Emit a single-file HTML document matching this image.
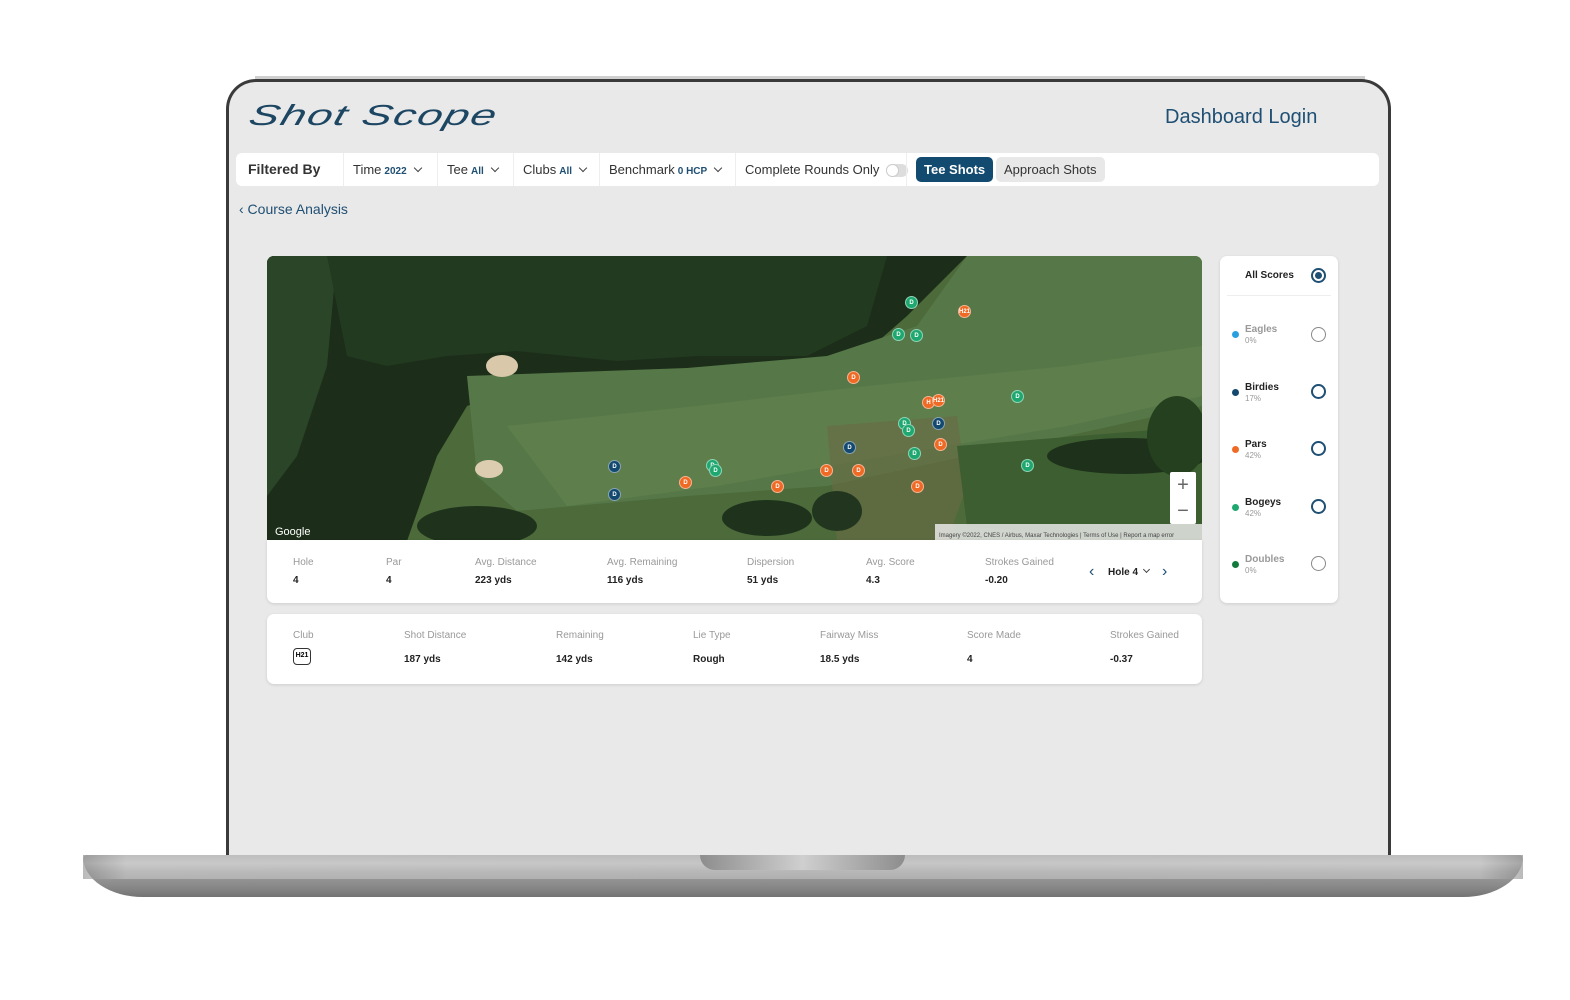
<!DOCTYPE html>
<html><head><meta charset="utf-8"><style>
*{margin:0;padding:0;box-sizing:border-box}
body{width:1570px;height:1000px;background:#fff;position:relative;overflow:hidden;font-family:"Liberation Sans",sans-serif}
.abs{position:absolute}
.screen{left:226px;top:79px;width:1165px;height:778px;border:3px solid #3a3a3a;border-bottom:none;border-radius:30px 30px 0 0;background:#e9e9e9;overflow:hidden}
.topline{left:255px;top:76px;width:1110px;height:4px;background:#cfcfcf}
.base{left:83px;top:855px;width:1440px;height:42px;border-radius:0 0 60px 60px/0 0 40px 40px;background:linear-gradient(180deg,#b0b0b0 0%,#cbcbcb 20%,#a5a5a5 40%,#959595 55%,#858585 80%,#737373 100%)}
.base:before{content:"";position:absolute;left:0;right:0;top:0;height:24px;background:linear-gradient(90deg,#8c8c8c 0%,#c8c8c8 3%,#c2c2c2 50%,#c8c8c8 97%,#8c8c8c 100%);opacity:.6;border-radius:4px 4px 0 0}
.notch{left:700px;top:855px;width:205px;height:15px;border-radius:0 0 22px 22px;background:linear-gradient(90deg,#8d8d8d,#cfcfcf 50%,#8d8d8d)}
.logo{left:254px;top:100px;font-style:italic;font-size:29px;color:#1d4663;transform-origin:0 0;transform:scaleX(1.55) skewX(-10deg);letter-spacing:1px;font-weight:normal}
.login{left:1165px;top:106px;font-size:20px;color:#1f4f73}
.bar{left:236px;top:153px;width:1143px;height:33px;background:#fff;border-radius:6px;font-size:13px;color:#333}
.bar .it{position:absolute;top:0;height:33px;line-height:33px;border-left:1px solid #eee;padding-left:9px}
.bar b.v{color:#1f4f73;font-size:10px;font-weight:bold;margin-left:3px}
.chev{display:inline-block;width:6px;height:6px;border-right:1.5px solid #444;border-bottom:1.5px solid #444;transform:rotate(45deg);margin-left:8px;position:relative;top:-3px}
.btn{position:absolute;top:4px;height:25px;line-height:25px;border-radius:5px;font-size:13px;padding:0 8px}
.card{background:#fff;border-radius:7px;box-shadow:0 1px 3px rgba(0,0,0,.12)}
.lbl{position:absolute;font-size:10px;color:#999}
.val{position:absolute;font-size:10px;color:#222;font-weight:bold}
.mk{position:absolute;width:13px;height:13px;border-radius:50%;color:#fff;font-size:6px;font-weight:bold;text-align:center;line-height:13px;margin:-6px 0 0 -6px;border:1px solid rgba(255,255,255,.5)}
.g{background:#1ea870}.o{background:#ef6a24}.b{background:#13496f}
.sc{position:absolute;left:1245px;font-size:10px;font-weight:bold;color:#222}
.sc small{display:block;font-size:8px;color:#999;font-weight:normal;margin-top:1px}
.dot{position:absolute;left:1232px;width:7px;height:7px;border-radius:50%}
.rad{position:absolute;left:1311px;width:15px;height:15px;border-radius:50%;border:2px solid #1f4f73}
</style></head><body>
<div class="abs topline"></div>
<div class="abs screen"></div>
<div class="abs logo">Shot Scope</div>
<div class="abs login">Dashboard Login</div>
<div class="abs bar">
 <div class="it" style="left:0;border:none;padding-left:12px;font-weight:bold;font-size:14px">Filtered By</div>
 <div class="it" style="left:107px">Time<b class="v">2022</b><span class="chev"></span></div>
 <div class="it" style="left:201px">Tee<b class="v">All</b><span class="chev"></span></div>
 <div class="it" style="left:277px">Clubs<b class="v">All</b><span class="chev"></span></div>
 <div class="it" style="left:363px">Benchmark<b class="v">0 HCP</b><span class="chev"></span></div>
 <div class="it" style="left:499px">Complete Rounds Only <span style="display:inline-block;width:22px;height:13px;border-radius:7px;background:#ddd;vertical-align:middle;position:relative;margin-left:3px"><span style="position:absolute;left:0;top:0;width:13px;height:13px;border-radius:50%;background:#fff;border:1px solid #ccc"></span></span></div>
 <div class="it" style="left:670px;border-left:1px solid #eee;width:1px;padding:0"></div>
 <div class="btn" style="left:680px;background:#134a70;color:#fff;font-weight:bold">Tee Shots</div>
 <div class="btn" style="left:760px;background:#e8e8e8;color:#333">Approach Shots</div>
</div>
<div class="abs" style="left:239px;top:201px;font-size:14px;color:#1f4f73">‹ Course Analysis</div>

<div class="abs" style="left:267px;top:256px;width:935px;height:285px;border-radius:7px 7px 0 0;overflow:hidden">
<svg width="935" height="285" viewBox="0 0 935 285">
<rect width="935" height="285" fill="#4c6a3a"/>
<polygon points="120,0 700,0 640,60 600,95 540,110 420,115 360,120 260,130 200,150 170,200 140,285 0,285 0,0" fill="#1c2e1a"/>
<polygon points="0,0 70,0 60,110 30,200 0,240" fill="#2a4527"/>
<polygon points="60,0 620,0 600,70 540,100 430,100 350,105 250,95 180,100 120,110 80,100" fill="#223a1f"/>
<polygon points="200,120 420,112 560,100 650,70 700,0 935,0 935,150 800,180 700,200 560,230 420,240 250,255 210,220" fill="#567848"/>
<polygon points="240,170 430,150 600,130 800,110 935,90 935,140 800,170 620,200 450,230 300,250" fill="#63804e" opacity=".7"/>
<polygon points="560,170 690,160 700,230 680,285 570,285" fill="#6b6b45" opacity=".6"/>
<polygon points="690,190 935,170 935,285 880,285 700,270" fill="#3d5e30"/>
<ellipse cx="860" cy="200" rx="80" ry="18" fill="#1e311b"/>
<ellipse cx="910" cy="180" rx="30" ry="40" fill="#24401f"/>
<ellipse cx="210" cy="270" rx="60" ry="20" fill="#1f331c"/>
<ellipse cx="500" cy="262" rx="45" ry="18" fill="#1f331c"/>
<ellipse cx="570" cy="255" rx="25" ry="20" fill="#22361f"/>
<ellipse cx="235" cy="110" rx="16" ry="11" fill="#d9c8aa"/>
<ellipse cx="222" cy="213" rx="14" ry="9" fill="#dccdb0"/>
<rect x="668" y="268" width="267" height="17" fill="#e8e8e8" opacity=".85"/>
<text x="8" y="279" font-size="11" fill="#fff" font-family="Liberation Sans">Google</text>
<text x="672" y="281" font-size="6" fill="#444" font-family="Liberation Sans">Imagery ©2022, CNES / Airbus, Maxar Technologies | Terms of Use | Report a map error</text>
</svg>
<div class="abs" style="left:903px;top:216px;width:26px;height:52px;background:#fff;border-radius:2px;text-align:center;color:#666;font-size:20px;line-height:26px">+<br>−</div>
</div>
<div class="mk g" style="left:911px;top:302px">D</div><div class="mk g" style="left:898px;top:334px">D</div><div class="mk g" style="left:916px;top:335px">D</div><div class="mk g" style="left:1017px;top:396px">D</div><div class="mk g" style="left:904px;top:423px">D</div><div class="mk g" style="left:908px;top:430px">D</div><div class="mk g" style="left:914px;top:453px">D</div><div class="mk g" style="left:1027px;top:465px">D</div><div class="mk g" style="left:712px;top:465px">D</div><div class="mk g" style="left:715px;top:470px">D</div>
<div class="mk o" style="left:964px;top:311px">H21</div><div class="mk o" style="left:853px;top:377px">D</div><div class="mk o" style="left:928px;top:402px">H</div><div class="mk o" style="left:938px;top:400px">H21</div><div class="mk o" style="left:940px;top:444px">D</div><div class="mk o" style="left:685px;top:482px">D</div><div class="mk o" style="left:777px;top:486px">D</div><div class="mk o" style="left:826px;top:470px">D</div><div class="mk o" style="left:858px;top:470px">D</div><div class="mk o" style="left:917px;top:486px">D</div>
<div class="mk b" style="left:938px;top:423px">D</div><div class="mk b" style="left:849px;top:447px">D</div><div class="mk b" style="left:614px;top:466px">D</div><div class="mk b" style="left:614px;top:494px">D</div>

<div class="abs card" style="left:267px;top:540px;width:935px;height:63px;border-radius:0 0 7px 7px"></div>
<div class="lbl" style="left:293px;top:557px">Hole</div><div class="val" style="left:293px;top:575px">4</div>
<div class="lbl" style="left:386px;top:557px">Par</div><div class="val" style="left:386px;top:575px">4</div>
<div class="lbl" style="left:475px;top:557px">Avg. Distance</div><div class="val" style="left:475px;top:575px">223 yds</div>
<div class="lbl" style="left:607px;top:557px">Avg. Remaining</div><div class="val" style="left:607px;top:575px">116 yds</div>
<div class="lbl" style="left:747px;top:557px">Dispersion</div><div class="val" style="left:747px;top:575px">51 yds</div>
<div class="lbl" style="left:866px;top:557px">Avg. Score</div><div class="val" style="left:866px;top:575px">4.3</div>
<div class="lbl" style="left:985px;top:557px">Strokes Gained</div><div class="val" style="left:985px;top:575px">-0.20</div>
<div class="abs" style="left:1089px;top:563px;font-size:16px;color:#1f4f73">‹</div>
<div class="val" style="left:1108px;top:567px">Hole 4 <span class="chev" style="width:5px;height:5px;margin-left:3px"></span></div>
<div class="abs" style="left:1162px;top:563px;font-size:16px;color:#1f4f73">›</div>

<div class="abs card" style="left:267px;top:614px;width:935px;height:70px"></div>
<div class="lbl" style="left:293px;top:630px">Club</div>
<div class="abs" style="left:293px;top:648px;width:18px;height:17px;border:1.5px solid #333;border-radius:4px;font-size:7px;font-weight:bold;text-align:center;line-height:14px">H21</div>
<div class="lbl" style="left:404px;top:630px">Shot Distance</div><div class="val" style="left:404px;top:654px">187 yds</div>
<div class="lbl" style="left:556px;top:630px">Remaining</div><div class="val" style="left:556px;top:654px">142 yds</div>
<div class="lbl" style="left:693px;top:630px">Lie Type</div><div class="val" style="left:693px;top:654px">Rough</div>
<div class="lbl" style="left:820px;top:630px">Fairway Miss</div><div class="val" style="left:820px;top:654px">18.5 yds</div>
<div class="lbl" style="left:967px;top:630px">Score Made</div><div class="val" style="left:967px;top:654px">4</div>
<div class="lbl" style="left:1110px;top:630px">Strokes Gained</div><div class="val" style="left:1110px;top:654px">-0.37</div>

<div class="abs card" style="left:1220px;top:256px;width:118px;height:347px"></div>
<div class="abs" style="left:1227px;top:295px;width:104px;height:1px;background:#eee"></div>
<div class="sc" style="top:270px">All Scores</div>
<div class="abs" style="left:1311px;top:268px;width:15px;height:15px;border-radius:50%;border:2px solid #1f4f73"><div style="margin:2px;width:7px;height:7px;border-radius:50%;background:#1f4f73"></div></div>
<div class="dot" style="top:331px;background:#2a9fe0"></div><div class="sc" style="top:324px;color:#999">Eagles<small>0%</small></div><div class="rad" style="top:327px;border-color:#888;border-width:1.5px"></div>
<div class="dot" style="top:389px;background:#13496f"></div><div class="sc" style="top:382px">Birdies<small>17%</small></div><div class="rad" style="top:384px"></div>
<div class="dot" style="top:446px;background:#ef6a24"></div><div class="sc" style="top:439px">Pars<small>42%</small></div><div class="rad" style="top:441px"></div>
<div class="dot" style="top:504px;background:#1ea870"></div><div class="sc" style="top:497px">Bogeys<small>42%</small></div><div class="rad" style="top:499px"></div>
<div class="dot" style="top:561px;background:#137a3c"></div><div class="sc" style="top:554px;color:#999">Doubles<small>0%</small></div><div class="rad" style="top:556px;border-color:#888;border-width:1.5px"></div>

<div class="abs base"></div>
<div class="abs notch"></div>
</body></html>
